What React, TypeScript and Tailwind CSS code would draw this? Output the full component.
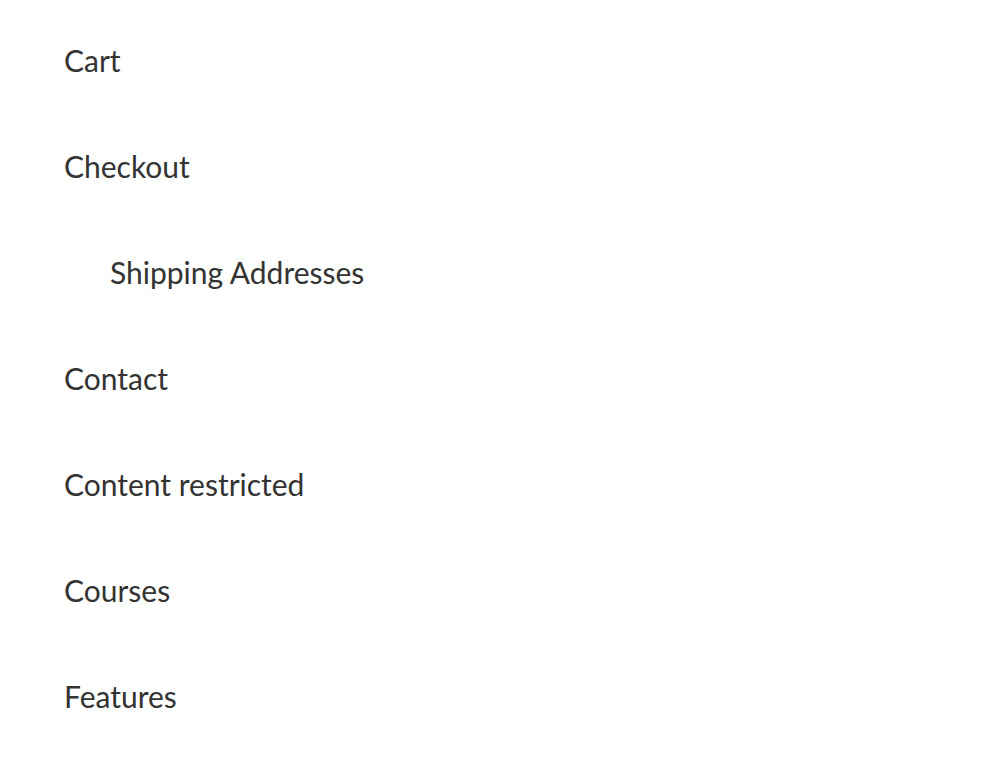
import React from 'react';

const pages = [
    { title: 'Cart', depth: 0 },
    { title: 'Checkout', depth: 0 },
    { title: 'Shipping Addresses', depth: 1 },
    { title: 'Contact', depth: 0 },
    { title: 'Content restricted', depth: 0 },
    { title: 'Courses', depth: 0 },
    { title: 'Features', depth: 0 },
];

export default function App() {
    return (
        <div className="min-h-screen bg-white px-16 pt-[39px] font-['Lato','Liberation_Sans',sans-serif] text-[#333333]">
            <ul className="flex flex-col gap-[64px]">
                {pages.map(p => (
                    <li key={p.title} className={`text-[30px] leading-[42px] ${p.depth ? 'pl-[46px]' : ''}`}>
                        {p.title}
                    </li>
                ))}
            </ul>
        </div>
    );
}
